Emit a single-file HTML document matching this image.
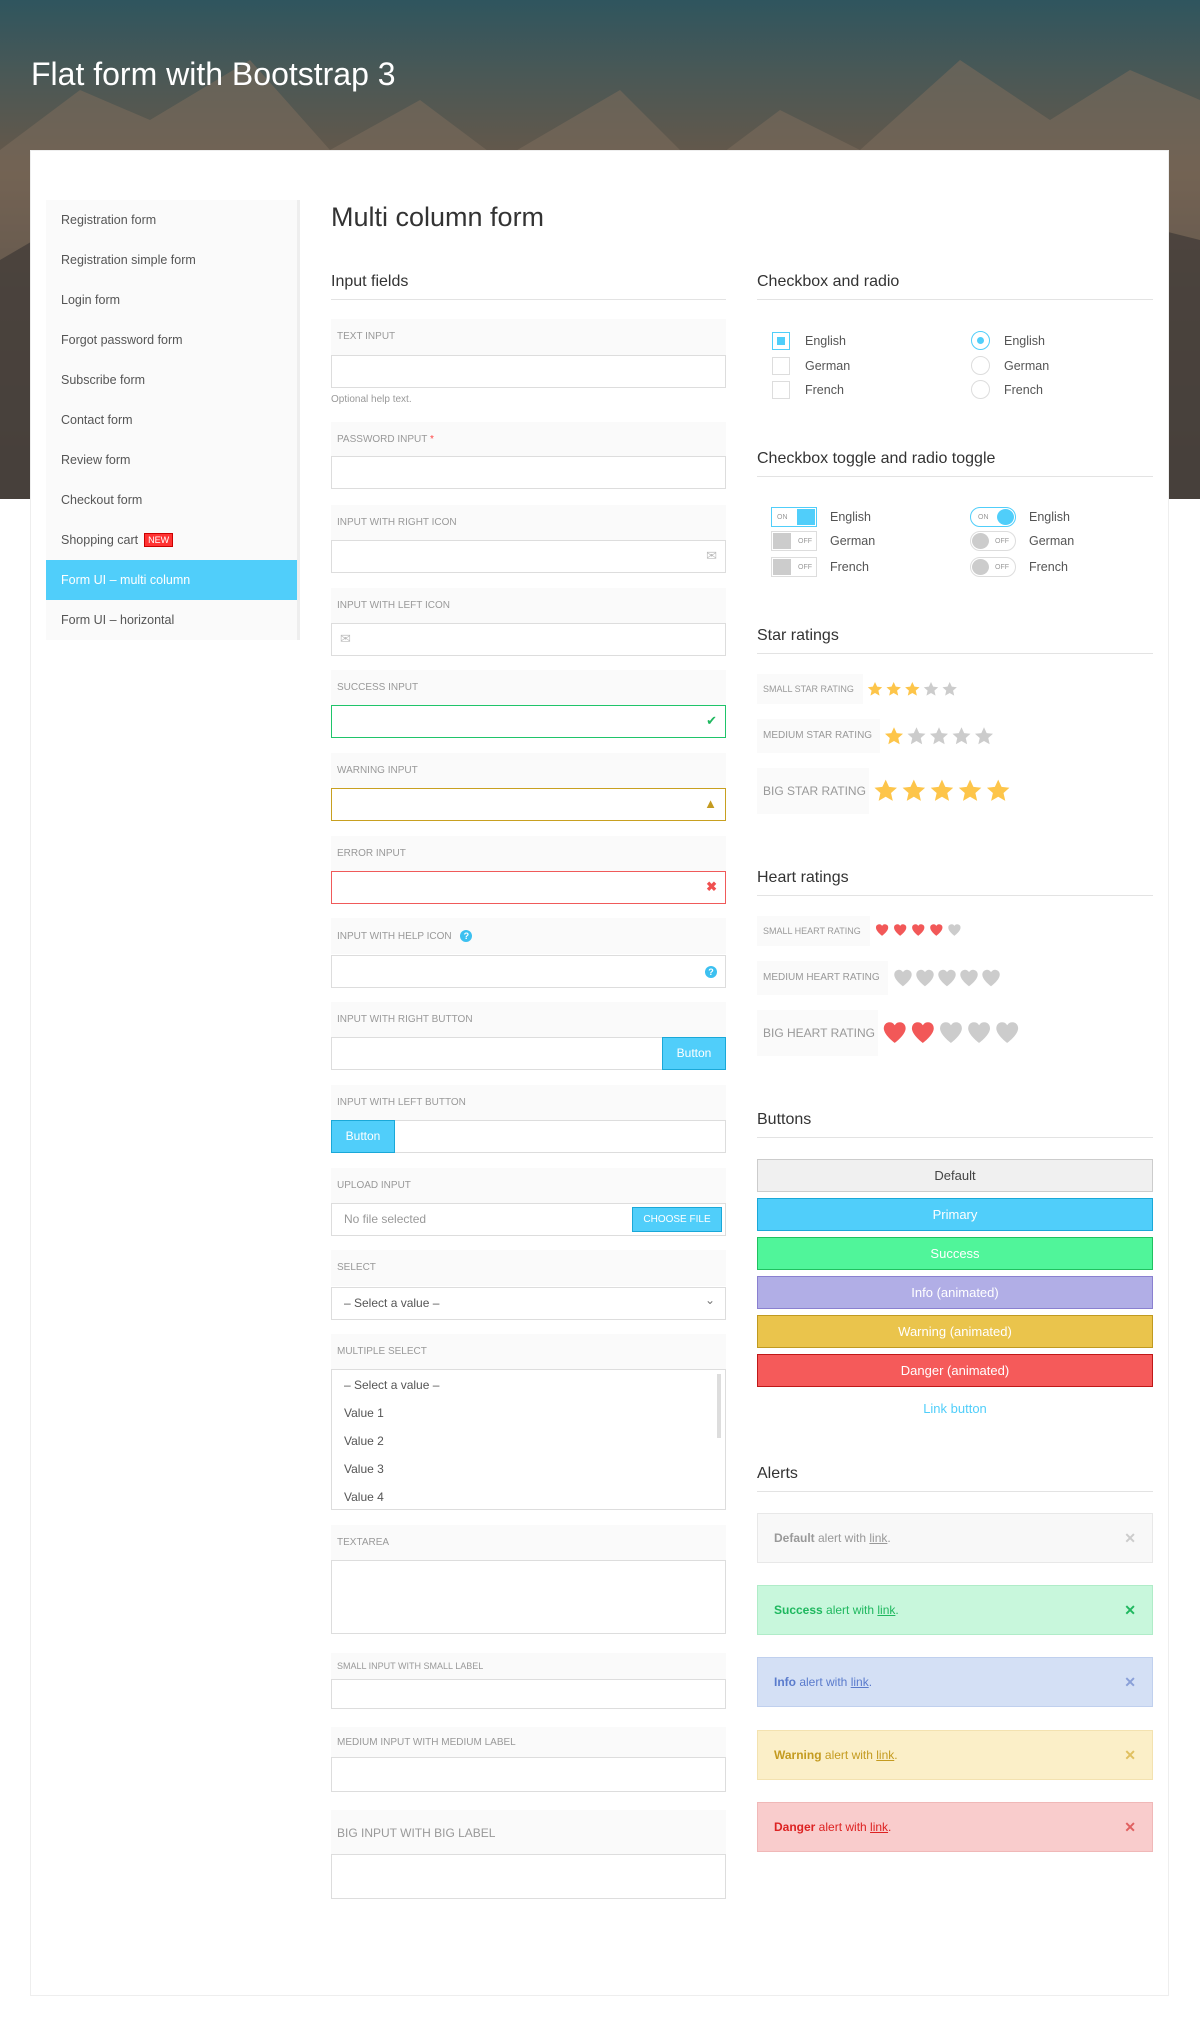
<!DOCTYPE html>
<html><head><meta charset="utf-8"><style>
*{margin:0;padding:0;box-sizing:border-box}
body{width:1200px;height:2026px;position:relative;background:#fff;font-family:"Liberation Sans",sans-serif;color:#444;overflow:hidden}
.a{position:absolute}
.hero{left:0;top:0;width:1200px;height:499px;background:linear-gradient(180deg,#2f555e 0%,#4a5856 15%,#6a5848 35%,#463e38 60%,#2e2c2b 100%)}
.card{left:30px;top:150px;width:1139px;height:1846px;background:#fff;border:1px solid #eee}
.side{left:46px;top:200px;width:254px;height:440px;background:#fafafa;border-right:3px solid #eee}
.side div{height:40px;line-height:40px;padding-left:15px;font-size:12.5px;color:#555}
.side .on{background:#50cefa;color:#fff}
.new{background:#f33;color:#fff;font-size:9px;padding:1px 3px;border:1px solid #c00;margin-left:6px;vertical-align:1px}
h2{position:absolute;font-weight:normal;font-size:16px;color:#333;border-bottom:1px solid #e3e3e3;padding-bottom:8px;padding-top:2px}
.lab{position:absolute;left:331px;width:395px;background:#fafafa;font-size:10px;color:#999;padding:12px 6px 0;height:36px}
.inp{position:absolute;left:331px;width:395px;height:33px;border:1px solid #ddd;background:#fff}
.ic{position:absolute;right:8px;top:7px;font-size:13px}
.btn{position:absolute;left:757px;width:396px;height:33px;border:1px solid;text-align:center;line-height:31px;font-size:13px;color:#fff}
.al{position:absolute;left:757px;width:396px;height:50px;border:1px solid;font-size:12px;line-height:48px;padding-left:16px}
.al .x{position:absolute;right:16px;top:0;font-weight:bold;font-size:14px}
.rl{position:absolute;left:757px;background:#fafafa;font-size:10px;color:#999;padding-left:6px}
.cb{position:absolute;width:18px;height:18px;border:1px solid #ddd;background:#fff}
.rd{position:absolute;width:19px;height:19px;border:1px solid #ddd;border-radius:50%;background:#fff}
.t{position:absolute;font-size:12.5px;color:#555}
.tg{position:absolute;width:46px;height:20px;border:1px solid #ddd;font-size:7px;color:#999}
svg.r{position:absolute;overflow:visible}
.y{fill:#fdc54a}.g{fill:#ccc}.h{fill:#f25858}
</style></head><body>
<svg width="0" height="0" style="position:absolute"><defs>
<path id="st" d="M12 1.5l3.2 7 7.6.8-5.7 5.1 1.7 7.5L12 18 5.2 21.9l1.7-7.5L1.2 9.3l7.6-.8z"/>
<path id="ht" d="M12 22S1.5 14.5 1.5 7.8A5.6 5.6 0 0 1 12 5a5.6 5.6 0 0 1 10.5 2.8C22.5 14.5 12 22 12 22z"/>
</defs></svg>
<div class="a hero">
<svg width="1200" height="499" style="position:absolute;left:0;top:0">
<polygon points="0,150 80,90 150,120 250,60 330,150 420,100 500,160 620,90 700,170 780,110 860,150 960,60 1050,120 1130,70 1200,100 1200,499 0,499" fill="#7a6b5c" opacity=".6"/>
<polygon points="0,260 120,190 260,250 380,180 520,240 700,200 860,230 1000,190 1200,240 1200,499 0,499" fill="#3e3936" opacity=".7"/>
</svg>
</div>
<div class="a" style="left:31px;top:56px;font-size:32px;color:#fff">Flat form with Bootstrap 3</div>
<div class="a card"></div>
<div class="a side">
<div>Registration form</div><div>Registration simple form</div><div>Login form</div><div>Forgot password form</div><div>Subscribe form</div><div>Contact form</div><div>Review form</div><div>Checkout form</div><div>Shopping cart<span class="new">NEW</span></div><div class="on">Form UI – multi column</div><div>Form UI – horizontal</div>
</div>
<div class="a" style="left:331px;top:202px;font-size:27px;color:#333">Multi column form</div>

<h2 style="left:331px;top:271px;width:395px">Input fields</h2>
<h2 style="left:757px;top:271px;width:396px">Checkbox and radio</h2>

<div class="lab" style="top:319px">TEXT INPUT</div><div class="inp" style="top:355px"></div>
<div class="a" style="left:331px;top:394px;font-size:10px;color:#999">Optional help text.</div>
<div class="lab" style="top:422px">PASSWORD INPUT <span style="color:#f44">*</span></div><div class="inp" style="top:456px"></div>
<div class="lab" style="top:505px">INPUT WITH RIGHT ICON</div><div class="inp" style="top:540px"><span class="ic" style="color:#bbb">✉</span></div>
<div class="lab" style="top:588px">INPUT WITH LEFT ICON</div><div class="inp" style="top:623px"><span class="ic" style="left:8px;right:auto;color:#bbb">✉</span></div>
<div class="lab" style="top:670px">SUCCESS INPUT</div><div class="inp" style="top:705px;border-color:#1fc46a"><span class="ic" style="color:#1fb85f">✔</span></div>
<div class="lab" style="top:753px">WARNING INPUT</div><div class="inp" style="top:788px;border-color:#c8a020"><span class="ic" style="color:#c49b20">▲</span></div>
<div class="lab" style="top:836px">ERROR INPUT</div><div class="inp" style="top:871px;border-color:#f05a5a"><span class="ic" style="color:#f05050;font-weight:bold">✖</span></div>
<div class="lab" style="top:918px">INPUT WITH HELP ICON <span style="display:inline-block;width:12px;height:12px;border-radius:50%;background:#3cc0f0;color:#fff;font-size:9px;text-align:center;line-height:12px;margin-left:6px;font-weight:bold">?</span></div><div class="inp" style="top:955px"><span class="a" style="right:8px;top:10px;width:12px;height:12px;border-radius:50%;background:#3cc0f0;color:#fff;font-size:9px;text-align:center;line-height:12px;font-weight:bold">?</span></div>
<div class="lab" style="top:1002px">INPUT WITH RIGHT BUTTON</div><div class="inp" style="top:1037px"><div class="a" style="right:-1px;top:-1px;width:64px;height:33px;background:#50cefa;border:1px solid #1aa8d8;color:#fff;font-size:12px;text-align:center;line-height:31px">Button</div></div>
<div class="lab" style="top:1085px">INPUT WITH LEFT BUTTON</div><div class="inp" style="top:1120px"><div class="a" style="left:-1px;top:-1px;width:64px;height:33px;background:#50cefa;border:1px solid #1aa8d8;color:#fff;font-size:12px;text-align:center;line-height:31px">Button</div></div>
<div class="lab" style="top:1168px">UPLOAD INPUT</div><div class="inp" style="top:1203px;font-size:12px;color:#999;line-height:31px;padding-left:12px">No file selected<div class="a" style="right:3px;top:3px;width:90px;height:25px;background:#50cefa;border:1px solid #1aa8d8;color:#fff;font-size:10px;text-align:center;line-height:23px">CHOOSE FILE</div></div>
<div class="lab" style="top:1250px">SELECT</div><div class="inp" style="top:1287px;font-size:12px;color:#555;line-height:31px;padding-left:12px">– Select a value –<span class="a" style="right:10px;top:-3px;color:#777">⌄</span></div>
<div class="lab" style="top:1334px">MULTIPLE SELECT</div><div class="inp" style="top:1369px;height:141px;font-size:12px;color:#555;padding:1px 12px;line-height:28px">– Select a value –<br>Value 1<br>Value 2<br>Value 3<br>Value 4<div class="a" style="right:4px;top:4px;width:4px;height:64px;background:#ddd"></div></div>
<div class="lab" style="top:1525px">TEXTAREA</div><div class="inp" style="top:1560px;height:74px"></div>
<div class="lab" style="top:1653px;height:26px;font-size:9px;padding-top:8px">SMALL INPUT WITH SMALL LABEL</div><div class="inp" style="top:1679px;height:30px"></div>
<div class="lab" style="top:1727px;height:30px;padding-top:10px">MEDIUM INPUT WITH MEDIUM LABEL</div><div class="inp" style="top:1757px;height:35px"></div>
<div class="lab" style="top:1810px;height:44px;font-size:12px;padding-top:16px">BIG INPUT WITH BIG LABEL</div><div class="inp" style="top:1854px;height:45px"></div>

<div class="cb" style="left:772px;top:332px;border-color:#50cefa"><div class="a" style="left:4px;top:4px;width:8px;height:8px;background:#50cefa"></div></div>
<div class="cb" style="left:772px;top:357px"></div><div class="cb" style="left:772px;top:381px"></div>
<div class="t" style="left:805px;top:334px">English</div><div class="t" style="left:805px;top:359px">German</div><div class="t" style="left:805px;top:383px">French</div>
<div class="rd" style="left:971px;top:331px;border-color:#50cefa"><div class="a" style="left:5px;top:5px;width:7px;height:7px;border-radius:50%;background:#50cefa"></div></div>
<div class="rd" style="left:971px;top:356px"></div><div class="rd" style="left:971px;top:380px"></div>
<div class="t" style="left:1004px;top:334px">English</div><div class="t" style="left:1004px;top:359px">German</div><div class="t" style="left:1004px;top:383px">French</div>

<h2 style="left:757px;top:448px;width:396px">Checkbox toggle and radio toggle</h2>
<div class="tg" style="left:771px;top:507px;border-color:#50cefa"><span class="a" style="left:5px;top:6px">ON</span><div class="a" style="right:1px;top:1px;width:18px;height:16px;background:#50cefa"></div></div>
<div class="tg" style="left:771px;top:531px"><div class="a" style="left:1px;top:1px;width:18px;height:16px;background:#ccc"></div><span class="a" style="right:4px;top:6px">OFF</span></div>
<div class="tg" style="left:771px;top:557px"><div class="a" style="left:1px;top:1px;width:18px;height:16px;background:#ccc"></div><span class="a" style="right:4px;top:6px">OFF</span></div>
<div class="t" style="left:830px;top:510px">English</div><div class="t" style="left:830px;top:534px">German</div><div class="t" style="left:830px;top:560px">French</div>
<div class="tg" style="left:970px;top:507px;border-radius:10px;border-color:#50cefa"><span class="a" style="left:7px;top:6px">ON</span><div class="a" style="right:1px;top:1px;width:17px;height:16px;border-radius:50%;background:#50cefa"></div></div>
<div class="tg" style="left:970px;top:531px;border-radius:10px"><div class="a" style="left:1px;top:1px;width:17px;height:16px;border-radius:50%;background:#ccc"></div><span class="a" style="right:6px;top:6px">OFF</span></div>
<div class="tg" style="left:970px;top:557px;border-radius:10px"><div class="a" style="left:1px;top:1px;width:17px;height:16px;border-radius:50%;background:#ccc"></div><span class="a" style="right:6px;top:6px">OFF</span></div>
<div class="t" style="left:1029px;top:510px">English</div><div class="t" style="left:1029px;top:534px">German</div><div class="t" style="left:1029px;top:560px">French</div>

<h2 style="left:757px;top:625px;width:396px">Star ratings</h2>
<div class="rl" style="top:674px;width:106px;height:30px;line-height:30px;font-size:9px">SMALL STAR RATING</div>
<svg class="r" style="left:867px;top:681px" width="96" height="16" viewBox="0 0 144 24"><use href="#st" class="y"/><use href="#st" x="28" class="y"/><use href="#st" x="56" class="y"/><use href="#st" x="84" class="g"/><use href="#st" x="112" class="g"/></svg>
<div class="rl" style="top:719px;width:123px;height:34px;line-height:34px">MEDIUM STAR RATING</div>
<svg class="r" style="left:884px;top:726px" width="115" height="20" viewBox="0 0 138 24"><use href="#st" class="y"/><use href="#st" x="27" class="g"/><use href="#st" x="54" class="g"/><use href="#st" x="81" class="g"/><use href="#st" x="108" class="g"/></svg>
<div class="rl" style="top:768px;width:112px;height:46px;line-height:46px;font-size:12px">BIG STAR RATING</div>
<svg class="r" style="left:873px;top:778px" width="140" height="25" viewBox="0 0 134 24"><use href="#st" class="y"/><use href="#st" x="27" class="y"/><use href="#st" x="54" class="y"/><use href="#st" x="81" class="y"/><use href="#st" x="108" class="y"/></svg>

<h2 style="left:757px;top:867px;width:396px">Heart ratings</h2>
<div class="rl" style="top:916px;width:113px;height:30px;line-height:30px;font-size:9px">SMALL HEART RATING</div>
<svg class="r" style="left:875px;top:923px" width="90" height="14" viewBox="0 0 154 24"><use href="#ht" class="h"/><use href="#ht" x="31" class="h"/><use href="#ht" x="62" class="h"/><use href="#ht" x="93" class="h"/><use href="#ht" x="124" class="g"/></svg>
<div class="rl" style="top:961px;width:131px;height:34px;line-height:34px">MEDIUM HEART RATING</div>
<svg class="r" style="left:893px;top:968px" width="108" height="20" viewBox="0 0 130 24"><use href="#ht" class="g"/><use href="#ht" x="26.5" class="g"/><use href="#ht" x="53" class="g"/><use href="#ht" x="79.5" class="g"/><use href="#ht" x="106" class="g"/></svg>
<div class="rl" style="top:1010px;width:121px;height:46px;line-height:46px;font-size:12px">BIG HEART RATING</div>
<svg class="r" style="left:882px;top:1020px" width="140" height="25" viewBox="0 0 134 24"><use href="#ht" class="h"/><use href="#ht" x="27" class="h"/><use href="#ht" x="54" class="g"/><use href="#ht" x="81" class="g"/><use href="#ht" x="108" class="g"/></svg>

<h2 style="left:757px;top:1109px;width:396px">Buttons</h2>
<div class="btn" style="top:1159px;background:#f0f0f0;border-color:#ccc;color:#444">Default</div>
<div class="btn" style="top:1198px;background:#50cefa;border-color:#1aa8d8">Primary</div>
<div class="btn" style="top:1237px;background:#50f59a;border-color:#20c060">Success</div>
<div class="btn" style="top:1276px;background:#b1aee6;border-color:#8a80d0">Info (animated)</div>
<div class="btn" style="top:1315px;background:#eac44c;border-color:#c09a20">Warning (animated)</div>
<div class="btn" style="top:1354px;background:#f55a5a;border-color:#c01818">Danger (animated)</div>
<div class="a" style="left:757px;width:396px;top:1401px;text-align:center;font-size:13px;color:#50cefa">Link button</div>

<h2 style="left:757px;top:1463px;width:396px">Alerts</h2>
<div class="al" style="top:1513px;background:#f8f8f8;border-color:#e8e8e8;color:#999"><b>Default</b> alert with <u>link</u>.<span class="x" style="color:#ccc">✕</span></div>
<div class="al" style="top:1585px;background:#c8f7dc;border-color:#b0ecc8;color:#1fb85f"><b>Success</b> alert with <u>link</u>.<span class="x">✕</span></div>
<div class="al" style="top:1657px;background:#d4e0f5;border-color:#c0d0ee;color:#5a7bcc"><b>Info</b> alert with <u>link</u>.<span class="x" style="color:#8aa0d8">✕</span></div>
<div class="al" style="top:1730px;background:#fbefc8;border-color:#f3e2b0;color:#c49b20"><b>Warning</b> alert with <u>link</u>.<span class="x" style="color:#e0c060">✕</span></div>
<div class="al" style="top:1802px;background:#f9cccc;border-color:#f0b8b8;color:#d22"><b>Danger</b> alert with <u>link</u>.<span class="x" style="color:#e06060">✕</span></div>
</body></html>
